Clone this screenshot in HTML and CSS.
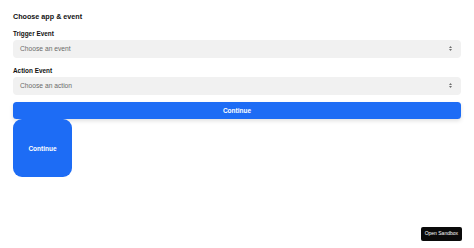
FILE: index.html
```html
<!DOCTYPE html>
<html lang="en">
<head>
<meta charset="utf-8">
<title>Choose app &amp; event</title>
<link rel="stylesheet" href="styles.css">
</head>
<body>
<div class="app">
  <h2 class="title">Choose app &amp; event</h2>
  <div class="field">
    <label class="label">Trigger Event</label>
    <div class="select">
      <span class="placeholder">Choose an event</span>
      <svg class="arrows" width="3" height="5" viewBox="0 0 6 10"><path d="M3 0 L6 4 H0 Z M3 10 L0 6 H6 Z" fill="#6f6f6f"/></svg>
    </div>
  </div>
  <div class="field last">
    <label class="label">Action Event</label>
    <div class="select">
      <span class="placeholder">Choose an action</span>
      <svg class="arrows" width="3" height="5" viewBox="0 0 6 10"><path d="M3 0 L6 4 H0 Z M3 10 L0 6 H6 Z" fill="#6f6f6f"/></svg>
    </div>
  </div>
  <button class="btn btn-wide">Continue</button>
  <button class="btn btn-square">Continue</button>
</div>
<div class="sandbox">Open Sandbox</div>
</body>
</html>
```

FILE: styles.css
```css
html, body {
  margin: 0;
  padding: 0;
  background: #ffffff;
}
body {
  font-family: "Liberation Sans", Arial, sans-serif;
  color: #111111;
}
.app {
  padding: 12px 13px 0 13px;
  display: flex;
  flex-direction: column;
  align-items: stretch;
}
.title {
  margin: 0 0 8.5px 0;
  font-size: 7.2px;
  line-height: 9px;
  font-weight: bold;
  color: #111;
}
.field {
  display: flex;
  flex-direction: column;
  margin-bottom: 9px;
}
.field.last {
  margin-bottom: 7px;
}
.label {
  font-size: 6.4px;
  line-height: 8px;
  font-weight: bold;
  margin-bottom: 2.5px;
  color: #111;
}
.select {
  position: relative;
  height: 17.5px;
  background: #f1f1f1;
  border-radius: 4px;
  display: flex;
  align-items: center;
  justify-content: space-between;
  padding: 0 9px 0 7px;
}
.placeholder {
  font-size: 6.7px;
  color: #6b6b6b;
}
.arrows {
  display: block;
}
.btn {
  font-family: "Liberation Sans", Arial, sans-serif;
  font-weight: bold;
  font-size: 6.5px;
  color: #ffffff;
  background: #1d6cf5;
  border: none;
  padding: 0;
  margin: 0;
  cursor: pointer;
}
.btn-wide {
  height: 17px;
  border-radius: 3.5px;
  box-shadow: 0 2px 4px rgba(0, 0, 0, 0.12);
  margin-bottom: 0.5px;
}
.btn-square {
  width: 59px;
  height: 58px;
  border-radius: 9px;
  align-self: flex-start;
}
.sandbox {
  position: fixed;
  right: 12px;
  bottom: 7.5px;
  height: 13.5px;
  padding: 0 4px;
  background: #0a0a0a;
  color: #ffffff;
  font-size: 5px;
  line-height: 13.5px;
  border-radius: 2px;
}
```
